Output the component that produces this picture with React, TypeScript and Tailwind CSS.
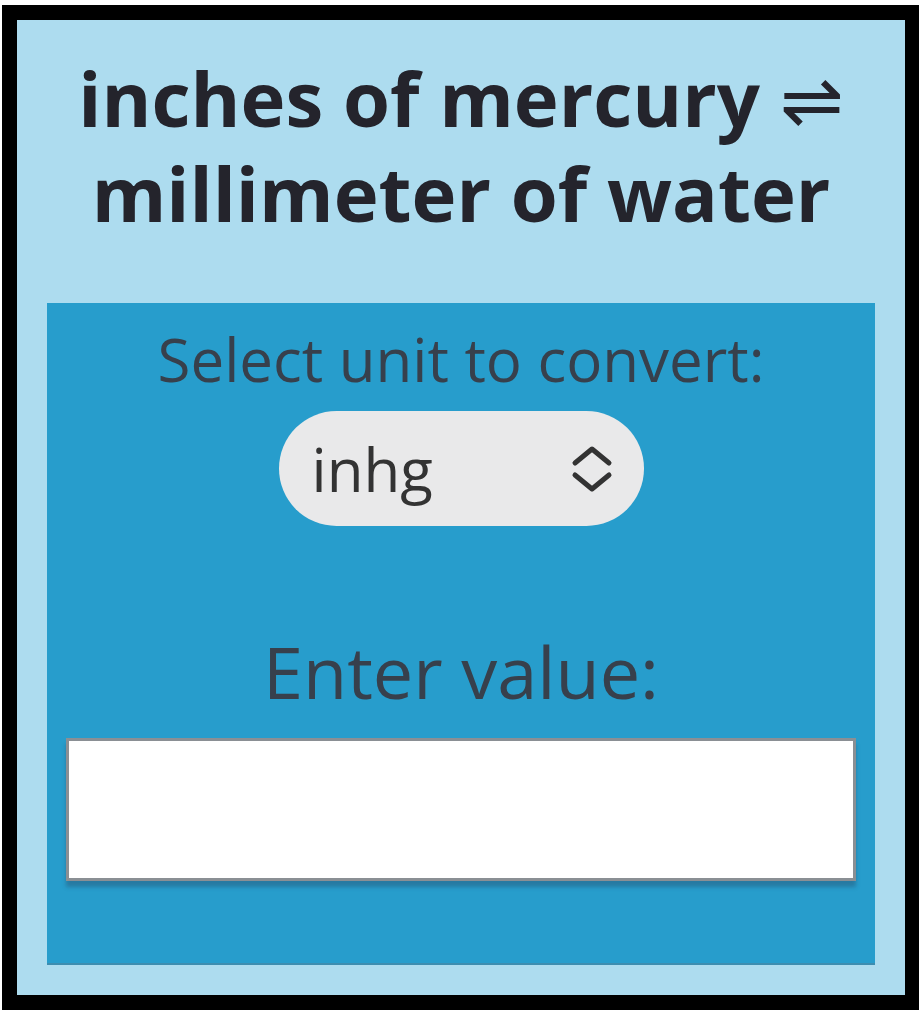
import React, { useState } from 'react';

const UNITS = ['inhg', 'mmh2o'];

function UpDownIcon() {
  return (
    <svg width="44" height="50" viewBox="0 0 44 50" fill="none" stroke="#333" strokeWidth="5" strokeLinecap="round" strokeLinejoin="round">
      <path d="M5 19 L22 5 L39 19" />
      <path d="M5 31 L22 45 L39 31" />
    </svg>
  );
}

export default function App() {
  const [unit, setUnit] = useState('inhg');
  const [value, setValue] = useState('');

  return (
    <div className="w-[919px] h-[1015px] overflow-hidden bg-white pt-[5px] pl-[2px]" style={{ fontFamily: '"Open Sans", sans-serif' }}>
      <div className="w-[918px] h-[1005px] border-[15px] border-black bg-[#addcef] flex flex-col">
        <h1 className="pt-[30px] text-center text-[76px] font-bold leading-[95px] text-[#24242c]">
          inches of mercury{' '}
          <span className="font-extralight leading-[0] font-['DejaVu_Sans',sans-serif]">⇌</span>
          <br />
          millimeter of water
        </h1>

        <div className="mx-[30px] mt-[63px] h-[662px] bg-[#279dcc] flex flex-col items-center border-b-2 border-[#3d8db0]">
          <label className="mt-[20px] text-[60px] leading-[72px] text-[#37404c]">Select unit to convert:</label>
          <div className="relative mt-[16px] w-[365px] h-[115px]">
            <select
              value={unit}
              onChange={(e) => setUnit(e.target.value)}
              className="w-full h-full appearance-none rounded-full bg-[#e9e9ea] pl-[33px] text-[60px] text-[#333] outline-none"
            >
              {UNITS.map((u) => (
                <option key={u} value={u}>
                  {u}
                </option>
              ))}
            </select>
            <div className="pointer-events-none absolute right-[30px] top-[33px]">
              <UpDownIcon />
            </div>
          </div>

          <label className="mt-[100px] text-[72px] leading-[90px] text-[#37404c]">Enter value:</label>
          <input
            type="text"
            value={value}
            onChange={(e) => setValue(e.target.value)}
            className="mt-[22px] w-[790px] h-[143px] bg-white border-[3px] border-[#8a8f94] shadow-[0_6px_4px_rgba(40,80,110,0.45)] outline-none px-4 text-[48px]"
          />
        </div>
      </div>
    </div>
  );
}
